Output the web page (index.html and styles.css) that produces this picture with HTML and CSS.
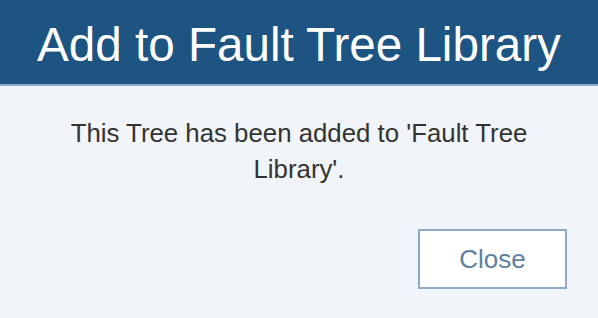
FILE: index.html
```html
<!DOCTYPE html>
<html>
<head>
<meta charset="utf-8">
<link rel="stylesheet" href="styles.css">
</head>
<body>
<div class="dialog">
  <header class="dialog-header">
    <h1 class="dialog-title">Add to Fault Tree Library</h1>
  </header>
  <main class="dialog-body">
    <p class="dialog-message">This Tree has been added to 'Fault Tree Library'.</p>
    <div class="dialog-actions">
      <button class="btn-close">Close</button>
    </div>
  </main>
</div>
</body>
</html>
```
FILE: styles.css
```css
html, body {
  margin: 0;
  padding: 0;
}
body {
  width: 598px;
  height: 318px;
  overflow: hidden;
  background: #f1f5f9;
  font-family: "Liberation Sans", Arial, sans-serif;
}
.dialog {
  display: flex;
  flex-direction: column;
  height: 318px;
}
.dialog-header {
  background: #1d5482;
  height: 79px;
  padding-top: 5px;
  border-bottom: 2px solid #86acd0;
}
.dialog-title {
  margin: 0;
  text-align: center;
  color: #ffffff;
  font-weight: normal;
  font-size: 47.6px;
  line-height: 79px;
  white-space: nowrap;
}
.dialog-body {
  flex: 1;
  display: flex;
  flex-direction: column;
  padding: 29px 31px 0 31px;
}
.dialog-message {
  margin: 0 auto;
  width: 500px;
  text-align: center;
  color: #333333;
  font-size: 25.8px;
  line-height: 36px;
}
.dialog-actions {
  display: flex;
  justify-content: flex-end;
  margin-top: 42px;
}
.btn-close {
  width: 149px;
  height: 60px;
  background: #ffffff;
  border: 2px solid #8eaac4;
  color: #5d7f9f;
  font-family: "Liberation Sans", Arial, sans-serif;
  font-size: 26px;
  padding: 0;
  border-radius: 0;
}
```
